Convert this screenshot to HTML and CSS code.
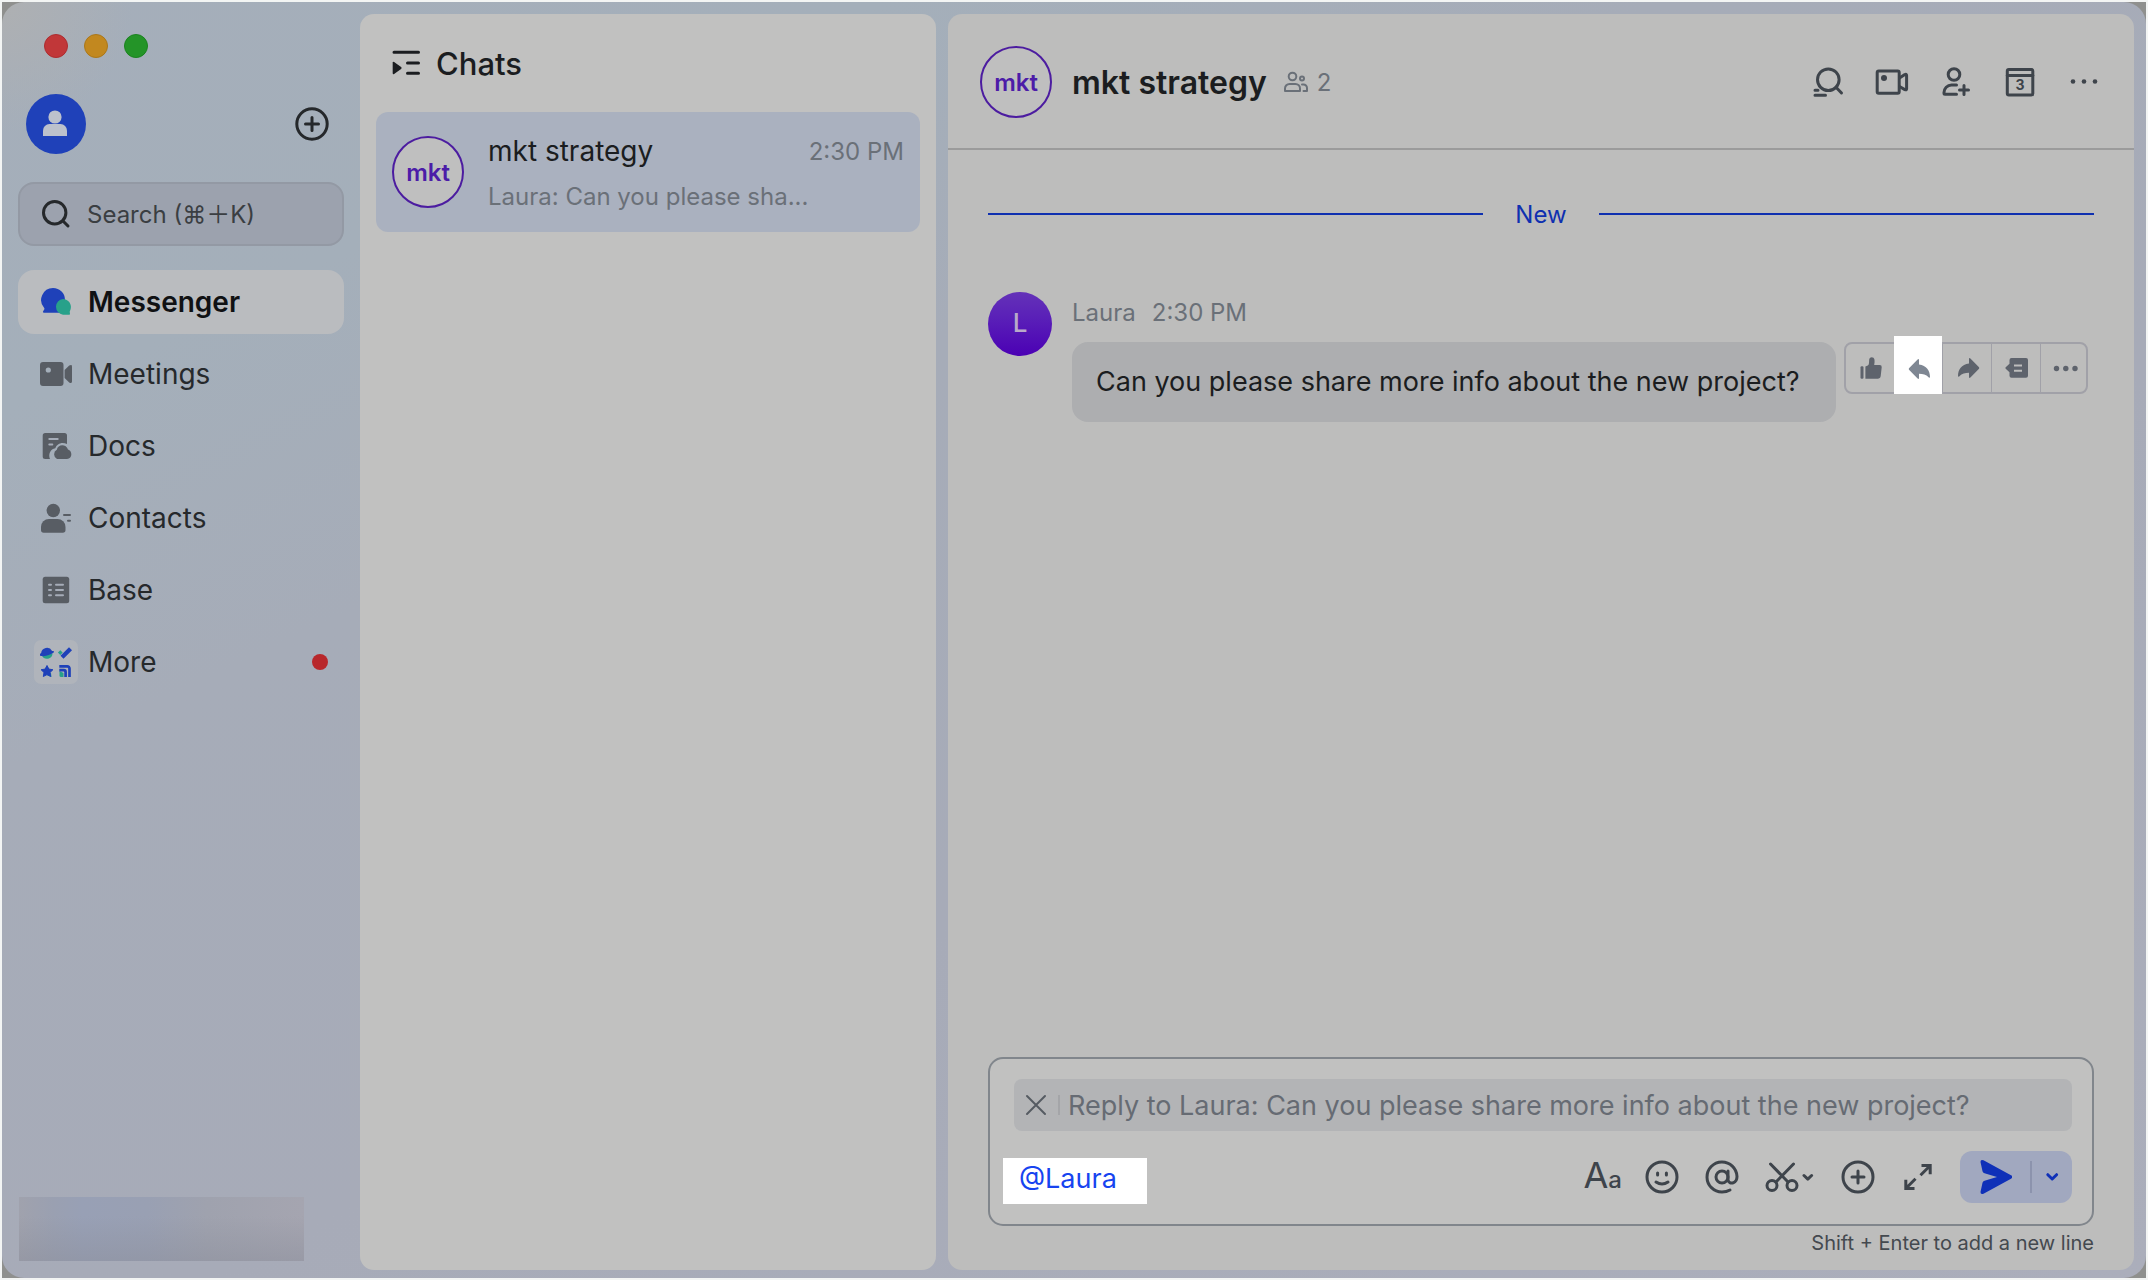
FILE: index.html
```html
<!DOCTYPE html>
<html lang="en">
<head>
<meta charset="utf-8">
<title>Messenger</title>
<meta name="viewport" content="width=device-width, initial-scale=1">
<link rel="stylesheet" href="styles.css">
</head>
<body>
<div class="desktop">
<div class="app">

  <aside class="sidebar">
    <div class="window-controls">
      <button class="light light-close" aria-label="Close"></button>
      <button class="light light-min" aria-label="Minimize"></button>
      <button class="light light-max" aria-label="Zoom"></button>
    </div>

    <div class="account">
      <button class="account-avatar" aria-label="Profile">
        <svg width="60" height="60" viewBox="0 0 60 60"><circle cx="29" cy="23" r="6.6"/><path d="M17 42v-5.500a6.500 6.500 0 0 1 6.500-6.500h11a6.500 6.500 0 0 1 6.500 6.500V42z"/></svg>
      </button>
      <button class="icon-btn" aria-label="Create">
        <svg class="line dark" width="40" height="40" viewBox="0 0 40 40"><circle cx="20" cy="20" r="15.200"/><path d="M20 13.500v13M13.500 20h13"/></svg>
      </button>
    </div>

    <label class="search">
      <svg class="line dark" width="32" height="32" viewBox="0 0 32 32"><circle cx="14.700" cy="14.700" r="11.200"/><path d="M23 23l5 5"/></svg>
      <input type="search" placeholder="Search (⌘＋K)" aria-label="Search">
    </label>

    <nav class="nav">
      <a class="nav-item active" href="#messenger">
        <svg width="32" height="32" viewBox="0 0 32 32"><path fill="#1f41b9" d="M13 2a12 12 0 0 1 12 12.300L20 26.700H4c-1.200 0-1.300-.8-.7-1.600l.9-1.500q.5-.8 0-1.600A12 12 0 0 1 13 2z"/><path fill="#28a18a" d="M23 13a8 8 0 0 1 7.500 10.500l-.8 2.300.3 2.200c0 .5-.2.700-.8.700H23A7.900 7.900 0 0 1 23 13z"/></svg>
        <span>Messenger</span>
      </a>
      <a class="nav-item" href="#meetings">
        <svg class="solid" width="32" height="32" viewBox="0 0 32 32"><path fill-rule="evenodd" d="M3 4h17.500a3 3 0 0 1 3 3v18a3 3 0 0 1-3 3H3a3 3 0 0 1-3-3V7a3 3 0 0 1 3-3zm5.300 5.400a2.600 2.600 0 1 0 0 5.200 2.600 2.600 0 0 0 0-5.200z"/><path d="M24.600 12l4.600-4.400q2.800-1.500 2.800.9v15q0 2.400-2.800.9L24.600 20z"/></svg>
        <span>Meetings</span>
      </a>
      <a class="nav-item" href="#docs">
        <svg class="solid" width="32" height="32" viewBox="0 0 32 32"><path d="M5.200 3H24.500a2.500 2.500 0 0 1 2.500 2.500v8.600c-5-2.600-10.300-.3-11.700 4.200-5 .8-7.300 6-5.300 10.700H5.200a2.500 2.500 0 0 1-2.500-2.500v-21A2.500 2.500 0 0 1 5.200 3z"/><path class="cut" d="M9.300 9h8.400M9.300 14.500h3"/><path d="M17 29a5.200 5.200 0 0 1-.2-9.200c1-6.200 9.600-6 11.200-.2C32.500 20.500 32.700 29 27 29z"/></svg>
        <span>Docs</span>
      </a>
      <a class="nav-item" href="#contacts">
        <svg class="solid" width="32" height="32" viewBox="0 0 32 32"><circle cx="13.300" cy="8.500" r="6.700"/><path d="M1 28v-3a8 8 0 0 1 8-8h8.500a8 8 0 0 1 8 8v3a2.700 2.700 0 0 1-2.700 2.700H3.700A2.700 2.700 0 0 1 1 28z"/><path class="bar" d="M24 13h6M28 18.700h2"/></svg>
        <span>Contacts</span>
      </a>
      <a class="nav-item" href="#base">
        <svg class="solid" width="32" height="32" viewBox="0 0 32 32"><rect x="2.700" y="2.700" width="26.500" height="26.500" rx="2.500"/><path class="cut" d="M9 10.700h2M16 10.700h7M9 16h2M16 16h7M9 21.300h2M16 21.300h7"/></svg>
        <span>Base</span>
      </a>
      <a class="nav-item more" href="#more">
        <svg class="more-tile" width="44" height="44" viewBox="0 0 44 44"><path fill="#28a18a" d="M8 15.500a5.500 5.500 0 0 0 10.500-2z"/><path fill="#1f41b9" d="M6 15.800v-2l1.100-.6a5.900 5.900 0 0 1 11-2.300l1.700.1v1.600C15.500 15.500 11 16.800 6 15.800z"/><path fill="#28a18a" d="M26.300 10.200l2.400 2.400-2.400 2.400-2.400-2.400z"/><path d="M28 17.200l8.500-8.500" stroke="#1f41b9" stroke-width="4.200"/><path fill="#28a18a" d="M12 33h5l.5 4-5-2z"/><path fill="#1f41b9" stroke="#1f41b9" stroke-linejoin="round" d="M13 25.500l1.900 3.600 4 .6-2.900 2.800.7 4-3.700-1.900-3.700 1.900.7-4-2.900-2.800 4-.6z"/><path fill="#28a18a" d="M25.500 31l4 2v4H27a1.500 1.500 0 0 1-1.500-1.500z"/><path fill="none" stroke="#1f41b9" stroke-width="2.700" d="M25.300 26.300h8a2.200 2.200 0 0 1 2.200 2.200V37M25.300 30.200h4.500a1.800 1.800 0 0 1 1.800 1.800v5"/></svg>
        <span>More</span>
        <i class="unread"></i>
      </a>
    </nav>

    <div class="masked"></div>
  </aside>

  <section class="chats">
    <header class="chats-head">
      <svg width="32" height="32" viewBox="0 0 32 32" fill="#1b1d20"><path class="stroke" d="M4 5.300h24.500M17.500 16h11M17.500 26.300h11"/><path d="M2.700 15.500q.2-1.300 1.400-.6l7 5q1.200 1 0 2l-7 5q-1.200.7-1.400-.6z"/></svg>
      <h2>Chats</h2>
    </header>
    <a class="chat" href="#mkt-strategy">
      <span class="mkt">mkt</span>
      <span class="chat-body">
        <span class="chat-top"><span class="chat-name">mkt strategy</span><time>2:30 PM</time></span>
        <span class="chat-preview">Laura: Can you please sha...</span>
      </span>
    </a>
  </section>

  <main class="conversation">
    <header class="conv-head">
      <span class="mkt">mkt</span>
      <h1>mkt strategy</h1>
      <span class="members">
        <svg width="26" height="24" viewBox="0 0 26 24"><circle cx="9.500" cy="6.500" r="3.800"/><circle cx="19" cy="8.500" r="2"/><path d="M2 21v-2.500A4.500 4.500 0 0 1 6.500 14h6a4.500 4.500 0 0 1 4.500 4.500V21zM19 14.500h1.500a3.500 3.500 0 0 1 3.500 3.500v3h-3.500"/></svg>
        2
      </span>
      <div class="conv-tools">
        <button class="icon-btn" aria-label="Search in chat"><svg class="line" width="48" height="48" viewBox="0 0 48 48"><circle cx="24.300" cy="21.700" r="10.800"/><path d="M32 29.200l5.500 5.800M11 32.200h3M11 37.300h10.500"/></svg></button>
        <button class="icon-btn" aria-label="Video meeting"><svg class="line" width="48" height="48" viewBox="0 0 48 48"><rect x="9.200" y="13" width="22" height="22.300" rx="1.500"/><path d="M31.500 20l5.300-3.400q1.800-.8 1.800.8v13.400q0 1.600-1.800.8L31.500 28.500"/><circle class="dot" cx="16" cy="20" r="3"/></svg></button>
        <button class="icon-btn" aria-label="Add members"><svg class="line" width="48" height="48" viewBox="0 0 48 48"><circle cx="22" cy="16.500" r="5.800"/><path d="M24.500 27h-5a7.500 7.500 0 0 0-7.500 7.500v.8q0 1 1 1h11.500M32 27.500v9M27.500 32h9"/></svg></button>
        <button class="icon-btn" aria-label="Calendar"><svg class="line" width="48" height="48" viewBox="0 0 48 48"><rect x="11.300" y="11.500" width="25.500" height="25.500" rx="1.500"/><path d="M11.300 17.500h25.500"/><text x="24" y="31.500" text-anchor="middle">3</text></svg></button>
        <button class="icon-btn" aria-label="More"><svg class="dots" width="48" height="48" viewBox="0 0 48 48"><circle cx="13" cy="23.500" r="2.300"/><circle cx="24" cy="23.500" r="2.300"/><circle cx="35" cy="23.500" r="2.300"/></svg></button>
      </div>
    </header>

    <div class="messages">
      <div class="divider"><span>New</span></div>

      <article class="message">
        <span class="avatar-l">L</span>
        <div class="message-main">
          <div class="meta"><span>Laura</span><time>2:30 PM</time></div>
          <div class="bubble-row">
            <p class="bubble">Can you please share more info about the new project?</p>
            <div class="actions">
              <button aria-label="Like"><svg width="48" height="48" viewBox="0 0 48 48"><rect x="14.500" y="22.300" width="3" height="12.400" rx="1.200"/><path d="M19.400 34.700V22.500l2.400-1q1.200-.8 1.200-2.500l.2-3.500c.6-3 4.800-2.800 5.300.3.200 1.800.1 3.400-.3 5.200h5.500q2.200 0 2 2.300l-1 8.700q-.4 2.700-3 2.700z"/></svg></button>
              <button class="reply" aria-label="Reply"><svg width="48" height="48" viewBox="0 0 48 48"><path d="M15 23.300l8.600-8.900q1.400-.9 1.400.6v4.500c7.500.8 11 6.300 11 12.600q-.4 1.300-1.400.2c-2.600-3-5.600-3.600-9.600-3.600V33q0 1.500-1.400.6L15 24.700q-.5-.7 0-1.400z"/></svg></button>
              <button aria-label="Forward"><svg width="48" height="48" viewBox="0 0 48 48"><path d="M36 23.300l-8.600-8.900q-1.400-.9-1.400.6v4.500c-7.500.8-11 6.300-11 12.600q.4 1.300 1.400.2c2.600-3 5.600-3.600 9.600-3.600V33q0 1.500 1.400.6L36 24.700q.5-.7 0-1.400z"/></svg></button>
              <button aria-label="Reply in thread"><svg width="48" height="48" viewBox="0 0 48 48"><path fill-rule="evenodd" d="M19.500 14H34a2 2 0 0 1 2 2v15.700a2 2 0 0 1-2 2H19.500a2 2 0 0 1-2-2v-3.400l-3.800-3.600q-.7-.7 0-1.400l3.800-3.600V16a2 2 0 0 1 2-2zM22 20.500v2h8v-2zm0 5.200v2h8v-2z"/></svg></button>
              <button aria-label="More actions"><svg width="48" height="48" viewBox="0 0 48 48"><circle cx="15.500" cy="24.500" r="2.700"/><circle cx="24.800" cy="24.500" r="2.700"/><circle cx="34" cy="24.500" r="2.700"/></svg></button>
            </div>
          </div>
        </div>
      </article>
    </div>

    <footer class="composer-wrap">
      <div class="composer">
        <div class="quote">
          <button class="quote-close" aria-label="Cancel reply"><svg width="44" height="44" viewBox="0 0 44 44"><path d="M13 13l18 18M31 13L13 31"/></svg></button>
          <span>Reply to Laura: Can you please share more info about the new project?</span>
        </div>
        <div class="compose-row">
          <input class="mention" type="text" value="@Laura" aria-label="Message">
          <div class="compose-tools">
            <button class="icon-btn aa" aria-label="Formatting"><span class="big-a">A</span><span class="small-a">a</span></button>
            <button class="icon-btn" aria-label="Emoji"><svg class="line" width="40" height="40" viewBox="0 0 40 40"><circle cx="20" cy="20" r="15"/><path d="M15.600 16v2M24.400 16v2M14 25q6 4 12 0"/></svg></button>
            <button class="icon-btn" aria-label="Mention"><svg class="line" width="40" height="40" viewBox="0 0 40 40"><circle cx="20" cy="20" r="6"/><path d="M26 14v8.500c0 3.200 3 4 5.200 3.300 2.600-1 3.800-3.300 3.800-6.300A15 15 0 1 0 20 35q4.500 0 8-2"/></svg></button>
            <button class="icon-btn" aria-label="Screenshot"><svg class="line" width="56" height="40" viewBox="0 0 56 40"><circle cx="10" cy="28.500" r="5"/><circle cx="30" cy="28.500" r="5"/><path d="M8.500 7l17.500 18M31.500 7L14 25M42 18.500l3.800 3.600 3.800-3.600"/></svg></button>
            <button class="icon-btn" aria-label="Attach"><svg class="line" width="40" height="40" viewBox="0 0 40 40"><circle cx="20" cy="20" r="15"/><path d="M20 14v12M14 20h12"/></svg></button>
            <button class="icon-btn" aria-label="Expand"><svg class="line square" width="40" height="40" viewBox="0 0 40 40"><path d="M23.500 8.500h8.700v8.700M31.500 9.200l-9 9M16.500 31.500H7.800v-8.700M8.500 30.800l9-9"/></svg></button>
            <div class="send">
              <button aria-label="Send"><svg width="52" height="52" viewBox="0 0 52 52"><path fill="#0f30b8" d="M20.500 11q0-3 3-1.700l27.500 15q3 1.700 0 3.400l-27.500 15q-3 1.300-3-1.700l2-9.300q.3-1.700 2-2L37 26l-12.500-3.700q-1.700-.3-2-2z"/></svg></button>
              <button class="send-menu" aria-label="Send options"><svg width="40" height="32" viewBox="0 0 40 32"><path d="M15.800 13.700l4.400 4.300 4.400-4.300" fill="none" stroke="#0f30b8" stroke-width="3" stroke-linecap="round" stroke-linejoin="round"/></svg></button>
            </div>
          </div>
        </div>
      </div>
      <p class="hint">Shift + Enter to add a new line</p>
    </footer>
  </main>

</div>
</div>
</body>
</html>
```

FILE: styles.css
```css
* { box-sizing: border-box; }

body {
  margin: 0;
  padding: 2px;
  background: #f3f5f4;
  font-family: Inter, "Liberation Sans", "Noto Sans CJK SC", sans-serif;
  color: #1b1d20;
}

h1, h2, p { margin: 0; }
button { border: 0; padding: 0; background: none; font: inherit; color: inherit; cursor: pointer; }
a { color: inherit; text-decoration: none; }
svg { display: block; flex: none; }

.desktop {
  background: #8f908e;
}

.app {
  display: grid;
  grid-template-columns: 358px 576px minmax(0, 1fr);
  min-height: calc(100vh - 4px);
  padding: 12px 12px 8px 0;
  border-radius: 22px;
  background:
    radial-gradient(circle at 0 0, #aeb0b2 0, rgba(174, 176, 178, 0) 130px),
    linear-gradient(155deg, #a5aeba 0, #a4afba 18%, #a6acb8 34%, #a7abb8 60%, #abaebb 100%);
}

/* Icon styles */
.icon-btn { display: flex; align-items: center; justify-content: center; }
.line { fill: none; stroke: #3e444b; stroke-width: 3; stroke-linecap: round; stroke-linejoin: round; }
.line.dark { stroke: #25282b; }
.line.square { stroke-linecap: butt; stroke-linejoin: miter; }
.line .dot { fill: #3e444b; stroke: none; }
.line text { fill: #3e444b; stroke: none; font-size: 14px; font-weight: 700; }
.dots { fill: #3e444b; }

/* Sidebar */
.sidebar { display: flex; flex-direction: column; padding: 0 16px 9px; }

.window-controls { display: flex; gap: 16px; padding: 20px 0 0 26px; }
.light { width: 24px; height: 24px; border-radius: 50%; border: 1px solid; }
.light-close { background: #c13739; border-color: #ad2c2f; }
.light-min { background: #c2881f; border-color: #ab7719; }
.light-max { background: #249428; border-color: #1b831f; }

.account { display: flex; align-items: center; justify-content: space-between; margin: 36px 12px 28px 8px; }
.account-avatar { width: 60px; height: 60px; border-radius: 50%; background: #1f41b9; }
.account-avatar svg { fill: #bcc1cc; }

.search {
  display: flex;
  align-items: center;
  gap: 15px;
  height: 64px;
  padding: 0 20px;
  border: 2px solid #9399a4;
  border-radius: 16px;
  background: #9ca2ae;
}
.search input {
  flex: 1;
  min-width: 0;
  padding: 0;
  border: 0;
  outline: 0;
  background: none;
  font: inherit;
  font-size: 24px;
}
.search input::placeholder { color: #3a3e42; opacity: 1; }

.nav { display: flex; flex-direction: column; gap: 8px; margin-top: 24px; }
.nav-item {
  display: flex;
  align-items: center;
  gap: 16px;
  height: 64px;
  padding: 0 16px 0 22px;
  border-radius: 16px;
  font-size: 28px;
  color: #26292c;
}
.nav-item.active { background: #babcbf; font-weight: 600; color: #101113; }
.nav-item.more { gap: 10px; padding-left: 16px; }
.solid { fill: #585d64; }
.cut { fill: none; stroke: #a5acb8; stroke-width: 2; stroke-linecap: round; }
.bar { fill: none; stroke: #585d64; stroke-width: 2; stroke-linecap: round; }
.more-tile { border-radius: 7px; background: #b0b4bb; }
.unread { width: 16px; height: 16px; margin-left: auto; border-radius: 50%; background: #b8272b; }

.masked {
  width: 285px;
  max-width: 100%;
  height: 64px;
  margin: auto 0 0 1px;
  background:
    linear-gradient(180deg, rgba(140, 143, 156, 0) 30%, rgba(140, 143, 156, .5) 100%),
    linear-gradient(90deg, #a0a2ad 0, #9aa0b1 12%, #98a0b5 22%, #99a0b3 45%, #9fa2ae 66%, #a5a5b0 100%);
}

/* Chat list */
.chats { padding: 0 16px; border-radius: 14px; background: #c1c1c0; }
.chats-head { display: flex; align-items: center; gap: 14px; height: 98px; padding-left: 14px; }
.chats-head .stroke { stroke: #1b1d20; stroke-width: 3; stroke-linecap: round; }
.chats-head h2 { font-size: 31px; font-weight: 500; }

.mkt {
  display: flex;
  flex: none;
  align-items: center;
  justify-content: center;
  width: 72px;
  height: 72px;
  border: 2px solid #4c1ca0;
  border-radius: 50%;
  background: #bfbfbf;
  font-size: 24px;
  font-weight: 600;
  color: #4c1ca8;
}

.chat {
  display: flex;
  align-items: center;
  gap: 24px;
  height: 120px;
  padding: 0 16px;
  border-radius: 12px;
  background: #aab1bf;
}
.chat-body { flex: 1; min-width: 0; padding-top: 2px; }
.chat-top { display: flex; align-items: center; justify-content: space-between; height: 48px; }
.chat-name { font-size: 28px; }
.chat time { font-size: 24px; color: #6a7078; }
.chat-preview { display: block; height: 44px; line-height: 44px; font-size: 24px; color: #6a7078; }

/* Conversation */
.conversation {
  display: flex;
  flex-direction: column;
  margin-left: 12px;
  border-radius: 14px;
  background: #bdbdbc;
}
.conv-head {
  display: flex;
  align-items: center;
  height: 136px;
  padding: 2px 26px 0 32px;
  border-bottom: 2px solid #9b9b9b;
}
.conv-head h1 { margin: 0 16px 0 20px; font-size: 32px; font-weight: 600; }
.members { display: flex; align-items: center; gap: 8px; font-size: 24px; color: #6a7078; }
.members svg { fill: none; stroke: #6a7078; stroke-width: 2; stroke-linejoin: round; stroke-linecap: round; }
.conv-tools { display: flex; gap: 16px; margin-left: auto; }

.messages { flex: 1; padding: 48px 40px 0; }
.divider { display: flex; align-items: center; gap: 32px; height: 32px; font-size: 24px; color: #0f30b0; }
.divider::before, .divider::after { content: ""; flex: 1; height: 2px; background: #0f30b0; }

.message { display: flex; gap: 20px; margin-top: 62px; }
.avatar-l {
  display: flex;
  flex: none;
  align-items: center;
  justify-content: center;
  width: 64px;
  height: 64px;
  padding-bottom: 4px;
  border-radius: 50%;
  background: linear-gradient(180deg, #6432b8, #5a20b8 40%, #4b00b4);
  font-size: 26px;
  font-weight: 500;
  color: #b9a9c9;
}
.message-main { flex: 1; min-width: 0; }
.meta { display: flex; gap: 16px; height: 50px; line-height: 42px; font-size: 24px; color: #6a7078; }
.bubble-row { display: flex; align-items: flex-start; gap: 8px; }
.bubble { padding: 20px 36px 20px 24px; border-radius: 16px; background: #adaeb0; font-size: 27px; line-height: 40px; }

.actions { display: flex; flex: none; width: 244px; height: 52px; border: 2px solid #a1a1a8; border-radius: 8px; }
.actions button { flex: 1; height: 48px; border-left: 1px solid #a1a1a8; }
.actions button:first-child { border-left: 0; }
.actions svg { margin: 0 auto; fill: #5e636c; }
.actions .reply { height: 58px; margin: -8px 0 0; padding-top: 8px; border: 0; background: #fff; }
.actions .reply svg { fill: #7f8793; }

/* Composer */
.composer-wrap { padding: 0 40px 14px; }
.composer { padding: 20px 20px 20px 24px; border: 2px solid #81868c; border-radius: 15px; background: #c1c1c0; }
.quote {
  display: flex;
  align-items: center;
  height: 52px;
  border-radius: 8px;
  background: #b3b4b6;
  font-size: 27px;
  color: #666b73;
}
.quote-close { display: flex; width: 46px; height: 20px; align-items: center; border-right: 2px solid #a4a5a8; margin-right: 8px; }
.quote-close path { stroke: #565b62; stroke-width: 2; stroke-linecap: round; }

.compose-row { display: flex; align-items: flex-start; justify-content: space-between; margin-top: 20px; }
.mention {
  width: 144px;
  height: 46px;
  margin: 7px 0 0 -11px;
  padding: 0 0 6px 16px;
  border: 0;
  outline: 0;
  background: #fff;
  font: inherit;
  font-size: 27px;
  color: #1744f0;
}
.compose-tools { display: flex; align-items: center; gap: 20px; }
.aa { align-items: baseline; color: #3e444b; line-height: 40px; }
.big-a { font-size: 36px; }
.small-a { font-size: 24px; font-weight: 500; }
.send { display: flex; align-items: center; width: 112px; height: 52px; margin-left: 2px; border-radius: 12px; background: #a1a8bf; }
.send-menu { margin-left: auto; border-left: 2px solid #8c93ad; }

.hint { margin-top: 4px; line-height: 26px; font-size: 20px; text-align: right; color: #44494f; }
```
